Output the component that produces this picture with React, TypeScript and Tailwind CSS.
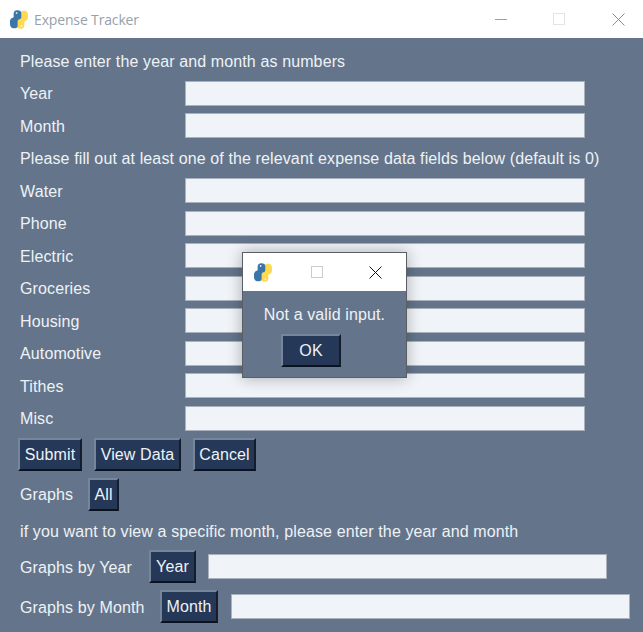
import React from "react";

const snake = "M7.5 0.3C10.5 0 12.3 1 12.3 3.5L12.3 7C12.3 8.6 11.2 9.2 9.8 9.6C8.8 10 8.6 11 8.6 12L8.6 15.8C8.6 18 6.2 18.7 4 18.2C2 17.7 1 16.2 1 14L1 11.2C1 9.2 2.6 8.2 4.2 7.6C5 7.2 4.6 5.6 4.6 4.2C4.6 2 5.4 0.6 7.5 0.3Z";

const Logo = ({ className }: { className: string }) => (
  <svg viewBox="0 0 20 19" className={className}>
    <path fill="#ffd94f" transform="rotate(180 10 9.5)" d={snake} />
    <path fill="#3a76a8" d={snake} />
    <circle cx="7.6" cy="3" r="0.9" fill="#dbe8f2" />
    <circle cx="12.4" cy="16" r="0.9" fill="#fff6cf" />
  </svg>
);

const Close = ({ color, className }: { color: string; className: string }) => (
  <svg viewBox="0 0 13 13" className={className}>
    <path d="M0.5 0.5L12.5 12.5M12.5 0.5L0.5 12.5" stroke={color} strokeWidth="1" fill="none" />
  </svg>
);

const Btn = ({ children, w }: { children: React.ReactNode; w: string }) => (
  <button className={`${w} h-[33px] shrink-0 flex items-center justify-center pt-[1px] bg-[#253858] text-[#eef2f6] text-[16px] border-2 border-t-[#75859a] border-l-[#75859a] border-r-[#141d2e] border-b-[#0b1220]`}>
    {children}
  </button>
);

const Field = ({ w }: { w: string }) => (
  <div className={`${w} h-[25px] shrink-0 bg-[#f0f4f8] border border-[#a9b1bd]`} />
);

const Row = ({ label }: { label: string }) => (
  <div className="flex items-center h-[32.5px]">
    <span className="w-[165px] shrink-0 pt-[2px]">{label}</span>
    <Field w="w-[400px]" />
  </div>
);

export default function App() {
  return (
    <div className="relative w-[643px] h-[632px] overflow-hidden bg-[#64758b] text-[#eef2f6] text-[16px] tracking-[0.12px] font-['Liberation_Sans',Arial,sans-serif]">
      <header className="h-[38px] bg-white flex items-center pl-[9px]">
        <Logo className="w-[20px] h-[19px]" />
        <span className="ml-[5px] text-[#98a0aa] text-[14px] tracking-[-0.15px] font-['Open_Sans',sans-serif]">Expense Tracker</span>
        <div className="ml-auto flex items-center">
          <div className="w-[12px] h-px bg-[#a0a0a0] mr-[46px]" />
          <div className="w-[12px] h-[12px] border border-[#e4e4e4] mr-[47px]" />
          <Close color="#8a8a8a" className="w-[13px] h-[13px] mr-[18px]" />
        </div>
      </header>

      <main className="pt-[11px]">
        <div className="pl-[20px]">
          <div className="h-[24px] flex items-center pt-[2px]">Please enter the year and month as numbers</div>
          <div className="h-[4px]" />
          <Row label="Year" />
          <Row label="Month" />
          <div className="h-[32.5px] flex items-center pt-[2px]">Please fill out at least one of the relevant expense data fields below (default is 0)</div>
          {["Water", "Phone", "Electric", "Groceries", "Housing", "Automotive", "Tithes", "Misc"].map((l) => (
            <Row key={l} label={l} />
          ))}
        </div>

        <div className="flex pl-[18px] gap-[12px] mt-[3px]">
          <Btn w="w-[64px]">Submit</Btn>
          <Btn w="w-[87px]">View Data</Btn>
          <Btn w="w-[63px]">Cancel</Btn>
        </div>

        <div className="flex items-center pl-[20px] mt-[7px]">
          <span className="w-[68px] shrink-0 pt-[2px]">Graphs</span>
          <Btn w="w-[31px]">All</Btn>
        </div>

        <div className="pl-[20px] h-[24px] flex items-center mt-[8px] pt-[2px]">
          if you want to view a specific month, please enter the year and month
        </div>

        <div className="flex items-center pl-[20px] mt-[7px]">
          <span className="w-[129px] shrink-0 pt-[4px]">Graphs by Year</span>
          <Btn w="w-[47px]">Year</Btn>
          <div className="ml-[12px]"><Field w="w-[399px]" /></div>
        </div>

        <div className="flex items-center pl-[20px] mt-[7px]">
          <span className="w-[140px] shrink-0 pt-[4px]">Graphs by Month</span>
          <Btn w="w-[58px]">Month</Btn>
          <div className="ml-[13px]"><Field w="w-[399px]" /></div>
        </div>
      </main>

      <div className="absolute left-[242px] top-[252px] w-[165px] h-[126px] border border-[#5a5f66] bg-[#64758b] shadow-[0_0_14px_rgba(0,0,0,0.3)] flex flex-col">
        <div className="h-[38px] bg-white flex items-center shrink-0">
          <Logo className="w-[20px] h-[19px] ml-[10px]" />
          <div className="w-[12px] h-[12px] border border-[#cccccc] ml-[38px]" />
          <Close color="#111111" className="w-[13px] h-[13px] ml-[46px]" />
        </div>
        <div className="text-center h-[24px] mt-[12px] flex items-center justify-center">Not a valid input.</div>
        <div className="pl-[38px] mt-[7px]">
          <Btn w="w-[60px]">OK</Btn>
        </div>
      </div>
    </div>
  );
}
